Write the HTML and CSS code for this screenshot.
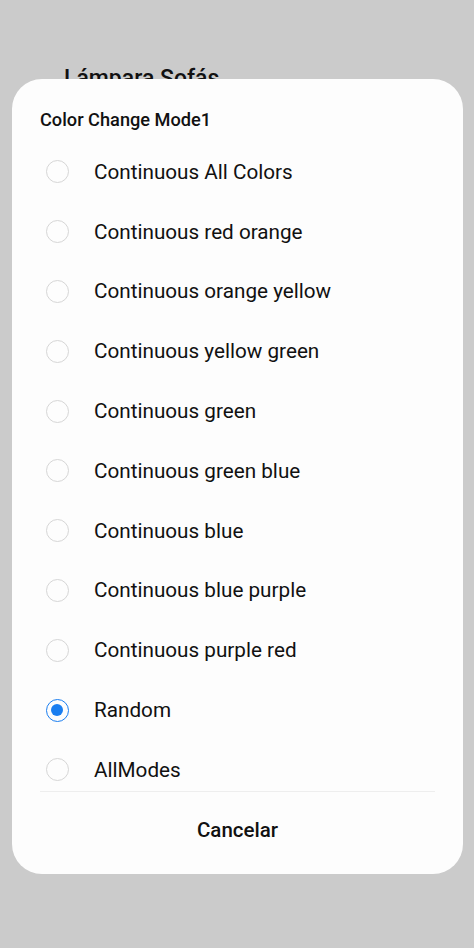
FILE: index.html
```html
<!DOCTYPE html>
<html>
<head>
<meta charset="utf-8">
<link rel="stylesheet" href="styles.css">
</head>
<body>
<div class="page">
  <div class="appbar">
    <span class="back">&#8592;</span>
    <span class="apptitle">Lámpara Sofás</span>
  </div>
</div>
<div class="dialog">
  <div class="dtitle">Color Change Mode1</div>
  <div class="list">
    <div class="item"><span class="radio"></span><span class="label">Continuous All Colors</span></div>
    <div class="item"><span class="radio"></span><span class="label">Continuous red orange</span></div>
    <div class="item"><span class="radio"></span><span class="label">Continuous orange yellow</span></div>
    <div class="item"><span class="radio"></span><span class="label">Continuous yellow green</span></div>
    <div class="item"><span class="radio"></span><span class="label">Continuous green</span></div>
    <div class="item"><span class="radio"></span><span class="label">Continuous green blue</span></div>
    <div class="item"><span class="radio"></span><span class="label">Continuous blue</span></div>
    <div class="item"><span class="radio"></span><span class="label">Continuous blue purple</span></div>
    <div class="item"><span class="radio"></span><span class="label">Continuous purple red</span></div>
    <div class="item"><span class="radio checked"></span><span class="label">Random</span></div>
    <div class="item"><span class="radio"></span><span class="label">AllModes</span></div>
  </div>
  <div class="divider"></div>
  <div class="cancel">Cancelar</div>
</div>
</body>
</html>
```
FILE: styles.css
```css
html, body {
  margin: 0;
  padding: 0;
}
body {
  background: #cbcbcb;
  font-family: Roboto, "Noto Sans", sans-serif;
  color: #111;
  width: 474px;
  height: 948px;
  overflow: hidden;
}
.page {
  height: 948px;
}
.appbar {
  display: flex;
  align-items: center;
  padding: 61px 0 0 36px;
  gap: 10px;
}
.back {
  font-size: 18px;
  color: #222;
  margin-top: 12px;
}
.apptitle {
  font-size: 23px;
  font-weight: 500;
  color: #111;
}
.dialog {
  position: absolute;
  left: 12px;
  top: 79px;
  width: 451px;
  height: 795px;
  background: #fdfdfd;
  border-radius: 30px;
  display: flex;
  flex-direction: column;
  overflow: hidden;
}
.dtitle {
  height: 63px;
  padding-left: 28px;
  font-size: 18.2px;
  font-weight: 500;
  line-height: 20px;
  padding-top: 31px;
  box-sizing: border-box;
}
.list {
  height: 649px;
  overflow: hidden;
  display: flex;
  flex-direction: column;
}
.item {
  flex: 0 0 auto;
  height: 59.8px;
  display: flex;
  align-items: center;
  padding-left: 34px;
}
.radio {
  width: 23px;
  height: 23px;
  box-sizing: border-box;
  border: 1.5px solid #d6d6d6;
  border-radius: 50%;
  flex: 0 0 auto;
  position: relative;
}
.radio.checked {
  border: 1.5px solid #1a7ef0;
}
.radio.checked::after {
  content: "";
  position: absolute;
  left: 4px;
  top: 4px;
  width: 12px;
  height: 12px;
  border-radius: 50%;
  background: #1a7ef0;
}
.label {
  margin-left: 25px;
  font-size: 20.7px;
  color: #111;
}
.divider {
  height: 1px;
  background: #eeeeee;
  margin: 0 28px;
}
.cancel {
  height: 76px;
  display: flex;
  align-items: center;
  justify-content: center;
  font-size: 20.5px;
  font-weight: 500;
}
```
